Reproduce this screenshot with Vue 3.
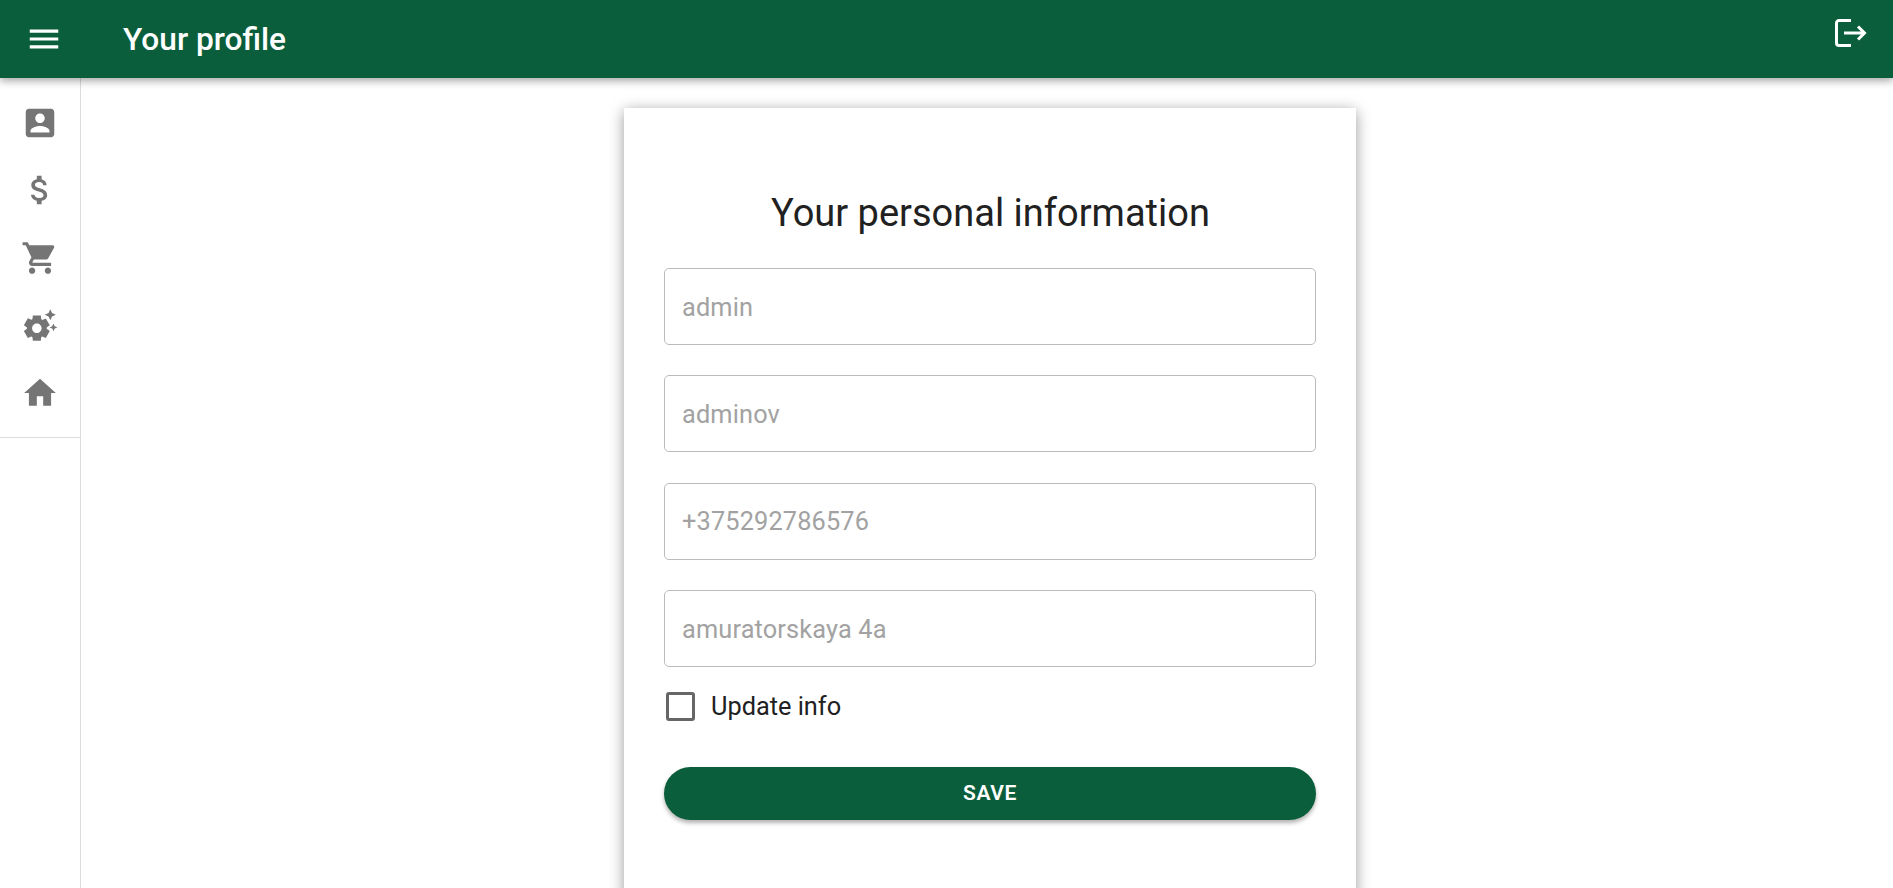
<script setup>
import { ref } from 'vue';

const navIcons = [
    'M3 5v14c0 1.1.89 2 2 2h14c1.1 0 2-.9 2-2V5c0-1.1-.9-2-2-2H5c-1.11 0-2 .9-2 2zm12 4c0 1.66-1.34 3-3 3s-3-1.34-3-3 1.34-3 3-3 3 1.34 3 3zm-9 8c0-2 4-3.1 6-3.1s6 1.1 6 3.1v1H6v-1z',
    'M11.8 10.9c-2.27-.59-3-1.2-3-2.15 0-1.09 1.01-1.85 2.7-1.85 1.78 0 2.44.85 2.5 2.1h2.21c-.07-1.72-1.12-3.3-3.21-3.81V3h-3v2.16c-1.94.42-3.5 1.68-3.5 3.61 0 2.31 1.91 3.46 4.7 4.13 2.5.6 3 1.48 3 2.41 0 .69-.49 1.79-2.7 1.79-2.06 0-2.87-.92-2.98-2.1h-2.2c.12 2.19 1.76 3.42 3.68 3.83V21h3v-2.15c1.95-.37 3.5-1.5 3.5-3.55 0-2.84-2.43-3.81-4.7-4.4z',
    'M7 18c-1.1 0-1.99.9-1.99 2S5.9 22 7 22s2-.9 2-2-.9-2-2-2zM1 2v2h2l3.6 7.59-1.35 2.45c-.16.28-.25.61-.25.96 0 1.1.9 2 2 2h12v-2H7.42c-.14 0-.25-.11-.25-.25l.03-.12.9-1.63h7.45c.75 0 1.41-.41 1.75-1.03l3.58-6.49c.08-.14.12-.31.12-.48 0-.55-.45-1-1-1H5.21l-.94-2H1zm16 16c-1.1 0-1.99.9-1.99 2s.89 2 1.99 2 2-.9 2-2-.9-2-2-2z',
    'M17.41 6.59 15 5.5l2.41-1.09L18.5 2l1.09 2.41L22 5.5l-2.41 1.09L18.5 9l-1.09-2.41zm3.87 6.13L20.5 11l-.78 1.72-1.72.78 1.72.78.78 1.72.78-1.72L23 13.5l-1.72-.78zm-5.04 1.65 1.94 1.47-2.5 4.33-2.24-.94c-.2.13-.42.26-.64.37l-.3 2.4h-5l-.3-2.41c-.22-.11-.43-.23-.64-.37l-2.24.94-2.5-4.33 1.94-1.47c-.01-.11-.01-.24-.01-.37s0-.26.01-.38l-1.94-1.47 2.5-4.33 2.24.94c.2-.13.42-.26.64-.37L7.5 6h5l.3 2.41c.22.11.43.23.64.37l2.24-.94 2.5 4.33-1.94 1.47c.01.12.01.24.01.37s0 .24-.01.36zM13 14c0-1.66-1.34-3-3-3s-3 1.34-3 3 1.34 3 3 3 3-1.34 3-3z',
    'M10 20v-6h4v6h5v-8h3L12 3 2 12h3v8z'
];

const fields = ['admin', 'adminov', '+375292786576', 'amuratorskaya 4a'];
const updateInfo = ref(false);
</script>

<template>
    <div class="page">
        <header class="topbar">
            <svg class="menu-icon" viewBox="0 0 24 24"><path d="M3 18h18v-2H3v2zm0-5h18v-2H3v2zm0-7v2h18V6H3z" /></svg>
            <h1 class="page-title">Your profile</h1>
            <svg class="logout-icon" viewBox="0 0 32 28">
                <path d="M16 1.5H4A2.5 2.5 0 0 0 1.5 4v20A2.5 2.5 0 0 0 4 26.5h12" />
                <path d="M9 14h20M23 7.5l6.5 6.5-6.5 6.5" />
            </svg>
        </header>
        <div class="body">
            <aside class="sidebar">
                <nav class="nav">
                    <div v-for="icon in navIcons" :key="icon" class="nav-item">
                        <svg class="nav-icon" viewBox="0 0 24 24"><path :d="icon" /></svg>
                    </div>
                </nav>
            </aside>
            <main class="content">
                <form class="card" @submit.prevent>
                    <h2 class="card-title">Your personal information</h2>
                    <input v-for="field in fields" :key="field" class="field" type="text" :placeholder="field">
                    <label class="check-row">
                        <input v-model="updateInfo" class="check" type="checkbox">
                        <span>Update info</span>
                    </label>
                    <button class="save" type="submit">SAVE</button>
                </form>
            </main>
        </div>
    </div>
</template>

<style scoped>
    .page {
        height: 100vh;
        display: flex;
        flex-direction: column;
        overflow: hidden;
        font-family: Roboto, "Liberation Sans", sans-serif;
        background: #fff;
    }

    .topbar {
        position: relative;
        z-index: 2;
        flex: none;
        height: 78px;
        display: flex;
        align-items: center;
        padding: 0 26px 0 25px;
        background: #0b5e3b;
        color: #fff;
        box-shadow: 0 3px 8px rgba(0, 0, 0, 0.35);
    }

    .menu-icon {
        width: 38px;
        height: 38px;
        fill: #fff;
    }

    .page-title {
        margin: 0 0 0 60px;
        flex: 1;
        font-size: 31.67px;
        font-weight: 500;
    }

    .logout-icon {
        width: 32px;
        height: 28px;
        margin-bottom: 12px;
        fill: none;
        stroke: #fff;
        stroke-width: 3;
    }

    .body {
        flex: 1;
        min-height: 0;
        display: flex;
    }

    .sidebar {
        flex: none;
        width: 81px;
        border-right: 1px solid #dcdcdc;
        box-sizing: border-box;
    }

    .nav {
        padding: 11px 0 10.5px;
        border-bottom: 1px solid #dcdcdc;
    }

    .nav-item {
        height: 67.5px;
        display: flex;
        align-items: center;
        justify-content: center;
    }

    .nav-icon {
        width: 38px;
        height: 38px;
        fill: #757575;
    }

    .content {
        flex: 1;
        min-width: 0;
        display: flex;
        justify-content: center;
        padding: 30px 0 0 6px;
    }

    .card {
        flex: none;
        width: 732px;
        box-sizing: border-box;
        height: 900px;
        padding: 75px 40px 0;
        display: flex;
        flex-direction: column;
        background: #fff;
        box-shadow: 0 3px 14px rgba(0, 0, 0, 0.4);
    }

    .card-title {
        margin: 0 0 25px;
        padding-left: 1px;
        font-size: 38px;
        line-height: 60px;
        font-weight: 400;
        text-align: center;
        color: #212121;
    }

    .field {
        flex: none;
        height: 77px;
        margin-bottom: 30.4px;
        padding: 1px 17px 0;
        box-sizing: border-box;
        border: 1px solid #bbb;
        border-radius: 5px;
        font: 400 25.33px Roboto, sans-serif;
        letter-spacing: 0.15px;
        outline: none;
    }

    .field::placeholder {
        color: #a2a2a2;
        opacity: 1;
    }

    .check-row {
        display: flex;
        align-items: center;
        gap: 16px;
        margin: -11px 0 0;
        height: 40px;
        font-size: 25.33px;
        color: #212121;
    }

    .check {
        appearance: none;
        width: 29px;
        height: 29px;
        margin: 0 0 0 2px;
        box-sizing: border-box;
        border: 3.5px solid #666;
        border-radius: 3px;
    }

    .save {
        flex: none;
        height: 53px;
        margin-top: 40px;
        border: none;
        border-radius: 27px;
        background: #0b5e3b;
        color: #fff;
        font: 600 21px Roboto, sans-serif;
        letter-spacing: 0.6px;
        box-shadow: 0 3px 4px rgba(0, 0, 0, 0.3);
    }
</style>

<style>
    body {
        overflow: hidden;
    }
</style>
